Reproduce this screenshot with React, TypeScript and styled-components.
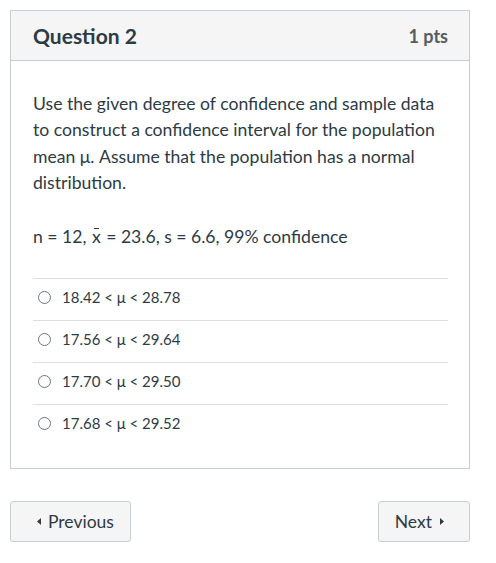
import React from 'react'
import styled, { createGlobalStyle } from 'styled-components'

const GlobalStyle = createGlobalStyle`
  html, body {
    margin: 0;
    padding: 0;
    background: #ffffff;
  }
  body {
    font-family: Lato, 'Liberation Sans', sans-serif;
    color: #2d3b45;
  }
`

const Page = styled.div`
  padding: 10px 26px 20px 10px;
  display: flex;
  flex-direction: column;
`

const Card = styled.div`
  border: 1px solid #c7cdd1;
  background: #fff;
`

const Header = styled.div`
  display: flex;
  align-items: center;
  justify-content: space-between;
  height: 49px;
  padding: 0 21px 0 22px;
  background: #f5f5f5;
  border-bottom: 1px solid #c7cdd1;
`

const Title = styled.h2`
  margin: 0;
  font-size: 21px;
  font-weight: 700;
  color: #2d3b45;
`

const Points = styled.span`
  font-size: 18px;
  font-weight: 700;
  color: #565c60;
`

const Body = styled.div`
  padding: 30px 21px 22px 22px;
`

const Paragraph = styled.p<{ $gap?: number }>`
  max-width: 410px;
  margin: 0 0 ${({ $gap }) => $gap ?? 0}px;
  font-size: 17.6px;
  line-height: 26.4px;
  color: #2d3b45;
`

const Bar = styled.span`
  position: relative;
  display: inline-block;
  margin: 0 1px 0 1px;
  &::before {
    content: '';
    position: absolute;
    left: 2px;
    right: 2px;
    top: 4px;
    height: 1px;
    background: #2d3b45;
  }
`

const Answers = styled.div`
  display: flex;
  flex-direction: column;
`

const Answer = styled.label`
  display: flex;
  align-items: center;
  gap: 11px;
  height: 42px;
  padding: 0 0 5px 5px;
  box-sizing: border-box;
  border-top: 1px solid #dbdfe2;
  font-size: 15px;
  color: #2d3b45;
`

const Radio = styled.span`
  width: 11px;
  height: 11px;
  border: 1px solid #6b7780;
  border-radius: 50%;
  background: #fff;
  flex-shrink: 0;
`

const Footer = styled.div`
  display: flex;
  justify-content: space-between;
  margin-top: 32px;
`

const NavButton = styled.button<{ $dir: 'prev' | 'next' }>`
  display: flex;
  align-items: center;
  gap: ${({ $dir }) => ($dir === 'prev' ? '7px' : '8px')};
  height: 41px;
  padding: ${({ $dir }) => ($dir === 'prev' ? '0 16px 0 26px' : '0 25px 0 16px')};
  background: #f5f5f5;
  border: 1px solid #c7cdd1;
  border-radius: 3px;
  font-family: Lato, 'Liberation Sans', sans-serif;
  font-size: 17.5px;
  color: #2d3b45;
`

const Arrow = styled.svg`
  width: 4px;
  height: 7px;
  fill: #2d3b45;
`

const answers = [
  ['18.42', '28.78'],
  ['17.56', '29.64'],
  ['17.70', '29.50'],
  ['17.68', '29.52'],
]

export default function App() {
  return (
    <Page>
      <GlobalStyle />
      <Card>
        <Header>
          <Title>Question 2</Title>
          <Points>1 pts</Points>
        </Header>
        <Body>
          <Paragraph $gap={27}>
            Use the given degree of confidence and sample data to construct a confidence interval for the
            population mean μ. Assume that the population has a normal distribution.
          </Paragraph>
          <Paragraph $gap={28}>
            n = 12, <Bar>x</Bar> = 23.6, s = 6.6, 99% confidence
          </Paragraph>
          <Answers>
            {answers.map(([lo, hi]) => (
              <Answer key={lo}>
                <Radio />
                {lo} &lt; μ &lt; {hi}
              </Answer>
            ))}
          </Answers>
        </Body>
      </Card>
      <Footer>
        <NavButton $dir="prev">
          <Arrow viewBox="0 0 4 7">
            <path d="M4 0 L0 3.5 L4 7 Z" />
          </Arrow>
          Previous
        </NavButton>
        <NavButton $dir="next">
          Next
          <Arrow viewBox="0 0 4 7">
            <path d="M0 0 L4 3.5 L0 7 Z" />
          </Arrow>
        </NavButton>
      </Footer>
    </Page>
  )
}
